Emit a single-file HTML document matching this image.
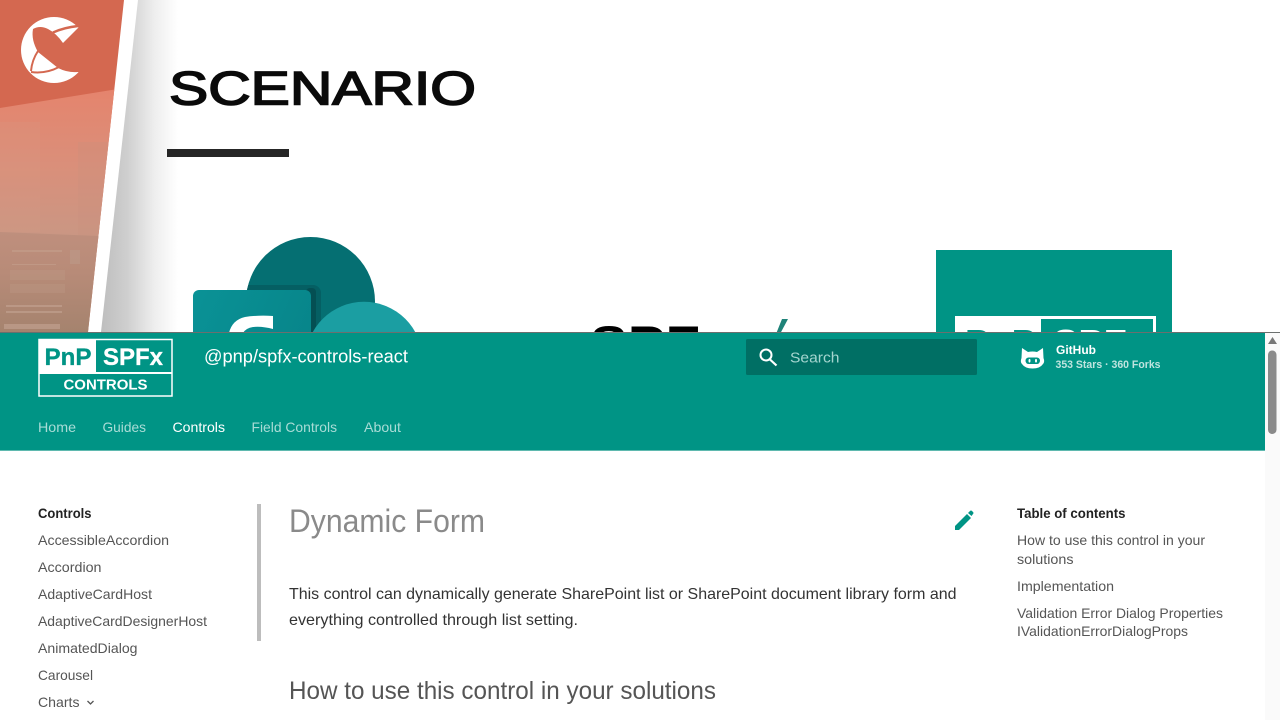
<!DOCTYPE html>
<html lang="en">
<head>
<meta charset="utf-8">
<title>Dynamic Form</title>
<style>
html,body{margin:0;padding:0;width:1280px;height:720px;overflow:hidden;background:#fff}
svg{display:block;position:absolute;left:0;top:0}
text{font-family:"Liberation Sans",sans-serif}
</style>
</head>
<body>
<svg width="1280" height="720" viewBox="0 0 1280 720" xmlns="http://www.w3.org/2000/svg">
<defs>
<linearGradient id="shade" x1="100" y1="0" x2="178" y2="0" gradientUnits="userSpaceOnUse">
<stop offset="0" stop-color="#bdbdbd"/><stop offset=".35" stop-color="#cfcfcf"/><stop offset=".7" stop-color="#eeeeee"/><stop offset="1" stop-color="#fff"/>
</linearGradient>
<linearGradient id="mid" x1="0" y1="90" x2="0" y2="240" gradientUnits="userSpaceOnUse">
<stop offset="0" stop-color="#e5846d"/><stop offset=".5" stop-color="#da8f7a"/><stop offset="1" stop-color="#c99784"/>
</linearGradient>
<linearGradient id="low" x1="0" y1="232" x2="0" y2="332" gradientUnits="userSpaceOnUse">
<stop offset="0" stop-color="#bf8f7d"/><stop offset=".4" stop-color="#b88b78"/><stop offset="1" stop-color="#a5836e"/>
</linearGradient>
<linearGradient id="sq" x1="193" y1="290" x2="311" y2="340" gradientUnits="userSpaceOnUse">
<stop offset="0" stop-color="#0a9296"/><stop offset="1" stop-color="#07858a"/>
</linearGradient>
<clipPath id="panel"><polygon points="0,0 124,0 88,332 0,332"/></clipPath>
<clipPath id="spc"><circle cx="310.500" cy="301.500" r="64.500"/></clipPath>
</defs>

<!-- slide -->
<rect width="1280" height="332" fill="#fff"/>
<polygon points="138,0 178,0 178,332 101,332" fill="url(#shade)"/>
<g clip-path="url(#panel)">
<rect width="130" height="332" fill="#d46850"/>
<polygon points="0,108 130,87 130,240 0,240" fill="url(#mid)"/>
<rect x="0" y="122" width="40" height="110" fill="#d99a85" opacity=".18"/>
<rect x="78" y="142" width="30" height="94" fill="#c98f7c" opacity=".28"/>
<polygon points="0,232 100,236 110,240 95,332 0,332" fill="url(#low)"/>
<rect x="12" y="250" width="50" height="2" fill="#c39c8a" opacity=".7"/>
<rect x="12" y="264" width="44" height="1" fill="#c39c8a" opacity=".7"/>
<rect x="10" y="270" width="55" height="10" fill="#bd9a88" opacity=".35"/>
<rect x="10" y="284" width="55" height="9" fill="#bd9a88" opacity=".35"/>
<rect x="6" y="305" width="56" height="2" fill="#c0a08f" opacity=".7"/>
<rect x="6" y="311" width="56" height="2" fill="#c0a08f" opacity=".7"/>
<rect x="4" y="324" width="56" height="5" fill="#c0a08f" opacity=".7"/>
<rect x="70" y="250" width="10" height="14" fill="#bd9a88" opacity=".6"/>
</g>

<!-- brand mark -->
<circle cx="54" cy="50" r="33" fill="#fff"/>
<path d="M33 29 Q40 25 48 29 Q56 33 63 43 L78 28 L95 28 L95 72 L78 72 Q68 73 58 68 L38 52 Q31 40 33 29 Z" fill="#d46850"/>
<path d="M53 32.500 Q64 27.500 78 26" fill="none" stroke="#d46850" stroke-width="2.500"/>
<path d="M31 71 Q32 60 38 51" fill="none" stroke="#d46850" stroke-width="2"/>
<path d="M31 72 Q46 74 59 67" fill="none" stroke="#d46850" stroke-width="2"/>

<!-- heading -->
<text x="169" y="104.500" font-size="47" textLength="307" lengthAdjust="spacingAndGlyphs" fill="#0a0a0a" stroke="#0a0a0a" stroke-width="1.600">SCENARIO</text>
<rect x="167" y="149" width="122" height="8" fill="#262626"/>

<!-- SharePoint logo -->
<circle cx="310.500" cy="301.500" r="64.500" fill="#056f72"/>
<rect x="200" y="285" width="121" height="60" rx="8" fill="#055f63" clip-path="url(#spc)"/>
<rect x="306" y="288" width="10" height="50" rx="4" fill="#044f53"/>
<rect x="193" y="290" width="118" height="60" rx="6" fill="url(#sq)"/>
<circle cx="364" cy="360.300" r="58.500" fill="#1b9ea2"/>
<path d="M229 333 Q232 320 245 317 Q258 315 273 316 L273 329 Q262 326 253 327 Q246 328 243 333 Z" fill="#fff"/>

<!-- SPFx fragment -->
<text x="590" y="361" font-size="50" font-weight="700" textLength="110" lengthAdjust="spacingAndGlyphs" fill="#000">SPF</text>
<polygon points="782,319 788,319 780,334 776,334" fill="#1f8379"/>

<!-- PnP large logo -->
<rect x="936" y="250" width="236" height="90" fill="#009485"/>
<rect x="955" y="316" width="201" height="20" fill="#fff"/>
<rect x="1041" y="319" width="112" height="20" fill="#009485"/>
<text x="965" y="355" font-size="36" font-weight="700" textLength="71" lengthAdjust="spacingAndGlyphs" fill="#009485">PnP</text>
<text x="1053" y="355" font-size="36" font-weight="700" textLength="95" lengthAdjust="spacingAndGlyphs" fill="#fff">SPFx</text>

<!-- header -->
<rect x="0" y="332" width="1265" height="119" fill="#009485"/>
<rect x="0" y="332" width="1280" height="1" fill="#6b6f6e"/>
<rect x="0" y="450" width="1265" height="1" fill="#5fb9af"/>

<!-- small logo -->
<rect x="39" y="339.500" width="133" height="56.500" fill="none" stroke="#fff" stroke-width="1.500"/>
<rect x="39" y="339.500" width="57" height="33" fill="#fff"/>
<rect x="39" y="372" width="133" height="2" fill="#fff"/>
<text x="44.500" y="365" font-size="24" font-weight="700" textLength="47" lengthAdjust="spacingAndGlyphs" fill="#009485" stroke="#009485" stroke-width=".3">PnP</text>
<text x="103" y="365" font-size="24" font-weight="700" textLength="60" lengthAdjust="spacingAndGlyphs" fill="#fff" stroke="#fff" stroke-width=".3">SPFx</text>
<text x="63.500" y="389.500" font-size="14.500" font-weight="700" textLength="84" lengthAdjust="spacingAndGlyphs" fill="#fff">CONTROLS</text>

<text x="204" y="362.500" font-size="18" textLength="204" lengthAdjust="spacingAndGlyphs" fill="#fff">@pnp/spfx-controls-react</text>

<g font-size="13.600" fill="#a9dcd6">
<text x="38" y="432" textLength="38" lengthAdjust="spacingAndGlyphs">Home</text>
<text x="102.500" y="432" textLength="43.500" lengthAdjust="spacingAndGlyphs">Guides</text>
<text x="172.500" y="432" textLength="52.500" lengthAdjust="spacingAndGlyphs" fill="#fff">Controls</text>
<text x="251.500" y="432" textLength="85.500" lengthAdjust="spacingAndGlyphs">Field Controls</text>
<text x="364" y="432" textLength="37" lengthAdjust="spacingAndGlyphs">About</text>
</g>

<!-- search -->
<rect x="746" y="339" width="231" height="36" rx="1.500" fill="#006f64"/>
<circle cx="766" cy="355" r="5.500" fill="none" stroke="#fff" stroke-width="2"/>
<path d="M770 359.500 L776.500 365.500" stroke="#fff" stroke-width="2.200" fill="none"/>
<text x="790" y="362.500" font-size="15" textLength="49.500" lengthAdjust="spacingAndGlyphs" fill="#a4d5cf">Search</text>

<!-- github -->
<path d="M1022 348 L1028 352 Q1032.500 351 1037 352 L1043 348 L1043.500 358 Q1045 362 1043 364 Q1040 368.500 1032.500 368.500 Q1025 368.500 1022 364 Q1020 362 1021.500 358 Z" fill="#fff"/>
<rect x="1025.500" y="357.500" width="14.500" height="6.500" rx="3.200" fill="#009485"/>
<ellipse cx="1029.500" cy="360.700" rx="1" ry="1.800" fill="#fff"/>
<ellipse cx="1036" cy="360.700" rx="1" ry="1.800" fill="#fff"/>
<text x="1056" y="354" font-size="12" font-weight="700" textLength="40" lengthAdjust="spacingAndGlyphs" fill="#fff">GitHub</text>
<text x="1055.500" y="368" font-size="11" font-weight="700" textLength="105" lengthAdjust="spacingAndGlyphs" fill="#bfe4df">353 Stars · 360 Forks</text>

<!-- scrollbar -->
<rect x="1265" y="333" width="15" height="387" fill="#fafafa"/>
<polygon points="1272.500,337 1277,344 1268,344" fill="#777"/>
<rect x="1268" y="350.500" width="8.500" height="83.500" rx="4.200" fill="#8a8a8a"/>

<!-- sidebar -->
<text x="38" y="518" font-size="13.600" font-weight="700" textLength="53.500" lengthAdjust="spacingAndGlyphs" fill="#222">Controls</text>
<g font-size="13.600" fill="#555">
<text x="38" y="545" textLength="131" lengthAdjust="spacingAndGlyphs">AccessibleAccordion</text>
<text x="38" y="572" textLength="63.500" lengthAdjust="spacingAndGlyphs">Accordion</text>
<text x="38" y="599" textLength="114" lengthAdjust="spacingAndGlyphs">AdaptiveCardHost</text>
<text x="38" y="626" textLength="169" lengthAdjust="spacingAndGlyphs">AdaptiveCardDesignerHost</text>
<text x="38" y="653" textLength="99.500" lengthAdjust="spacingAndGlyphs">AnimatedDialog</text>
<text x="38" y="680" textLength="55" lengthAdjust="spacingAndGlyphs">Carousel</text>
<text x="38" y="707" textLength="41.500" lengthAdjust="spacingAndGlyphs">Charts</text>
</g>
<path d="M87.500 701 L90.500 704 L93.500 701" fill="none" stroke="#555" stroke-width="1.300"/>
<rect x="257" y="504" width="4" height="137" fill="#bdbdbd"/>

<!-- content -->
<text x="289" y="532" font-size="32" textLength="196" lengthAdjust="spacingAndGlyphs" fill="#8a8a8a">Dynamic Form</text>
<path d="M955 530 L955 526 L967 514 L971 518 L959 530 Z M968 513 L970 511 Q971 510 972 511 L973 512 Q974 513 973 514 L971.500 516 Z" fill="#009485"/>
<g font-size="16" fill="#333">
<text x="289" y="599" textLength="667.500" lengthAdjust="spacingAndGlyphs">This control can dynamically generate SharePoint list or SharePoint document library form and</text>
<text x="289" y="625" textLength="289" lengthAdjust="spacingAndGlyphs">everything controlled through list setting.</text>
</g>
<text x="289" y="699" font-size="25" textLength="427" lengthAdjust="spacingAndGlyphs" fill="#555">How to use this control in your solutions</text>

<!-- toc -->
<text x="1017" y="518" font-size="13.600" font-weight="700" textLength="108.500" lengthAdjust="spacingAndGlyphs" fill="#222">Table of contents</text>
<g font-size="13.600" fill="#555">
<text x="1017" y="545" textLength="188" lengthAdjust="spacingAndGlyphs">How to use this control in your</text>
<text x="1017" y="564" textLength="56.500" lengthAdjust="spacingAndGlyphs">solutions</text>
<text x="1017" y="591" textLength="97" lengthAdjust="spacingAndGlyphs">Implementation</text>
<text x="1017" y="618" textLength="206" lengthAdjust="spacingAndGlyphs">Validation Error Dialog Properties</text>
<text x="1017" y="636" textLength="171" lengthAdjust="spacingAndGlyphs">IValidationErrorDialogProps</text>
</g>
</svg>
</body>
</html>
